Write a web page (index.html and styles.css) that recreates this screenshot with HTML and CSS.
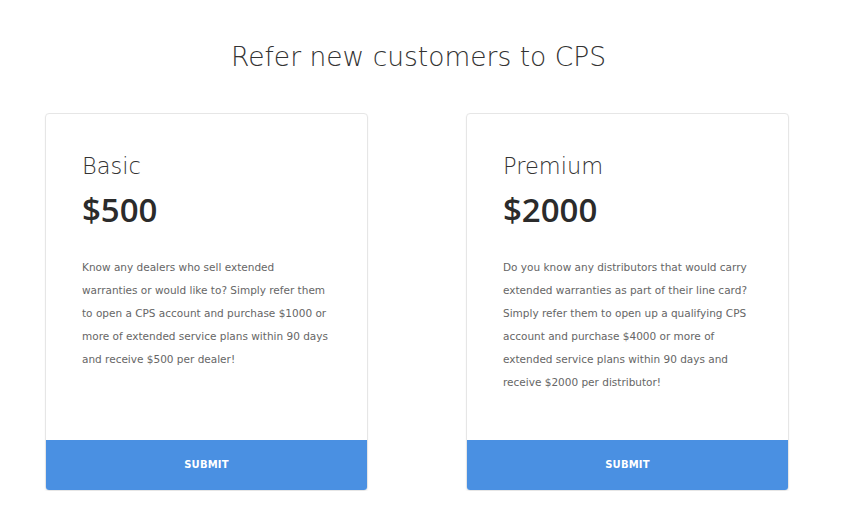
FILE: index.html
```html
<!DOCTYPE html>
<html>
<head>
<meta charset="utf-8">
<link rel="stylesheet" href="styles.css">
</head>
<body>
<h1 class="title">Refer new customers to CPS</h1>
<div class="cards">
  <div class="card">
    <div class="card-body">
      <h2 class="plan">Basic</h2>
      <div class="price">$500</div>
      <p class="desc">Know any dealers who sell extended<br>warranties or would like to? Simply refer them<br>to open a CPS account and purchase $1000 or<br>more of extended service plans within 90 days<br>and receive $500 per dealer!</p>
    </div>
    <button class="submit">SUBMIT</button>
  </div>
  <div class="card">
    <div class="card-body">
      <h2 class="plan">Premium</h2>
      <div class="price">$2000</div>
      <p class="desc">Do you know any distributors that would carry<br>extended warranties as part of their line card?<br>Simply refer them to open up a qualifying CPS<br>account and purchase $4000 or more of<br>extended service plans within 90 days and<br>receive $2000 per distributor!</p>
    </div>
    <button class="submit">SUBMIT</button>
  </div>
</div>
</body>
</html>
```
FILE: styles.css
```css
html, body {
  margin: 0;
  padding: 0;
  background: #fff;
}
body {
  font-family: "DejaVu Sans", "Noto Sans", sans-serif;
  color: #333;
}
.title {
  margin: 40px 0 0;
  text-align: center;
  font-size: 26.5px;
  font-weight: 200;
  line-height: 34px;
  color: #333;
  transform: translateX(-3px);
}
.cards {
  display: grid;
  grid-template-columns: 323px 323px;
  column-gap: 98px;
  padding-left: 45px;
  margin-top: 39px;
}
.card {
  display: flex;
  flex-direction: column;
  border: 1px solid #e6e6e6;
  border-radius: 4px;
  height: 378px;
  box-sizing: border-box;
  overflow: hidden;
  box-shadow: 0 1px 2px rgba(0,0,0,0.06);
}
.card-body {
  flex: 1;
  padding: 38px 36px 0 36px;
}
.plan {
  margin: 0;
  font-size: 22.5px;
  font-weight: 200;
  line-height: 28px;
  color: #333;
}
.price {
  margin-top: 11px;
  font-family: "Open Sans", "DejaVu Sans", sans-serif;
  font-size: 33px;
  font-weight: 600;
  line-height: 38px;
  color: #2b2b2b;
}
.desc {
  margin: 27px 0 0;
  font-size: 10.5px;
  line-height: 23px;
  color: #666;
  white-space: nowrap;
}
.submit {
  height: 50px;
  border: 0;
  margin: 0;
  padding: 0 0 2px;
  background: #4a90e2;
  color: #fff;
  font-family: inherit;
  font-size: 10px;
  font-weight: 700;
  letter-spacing: 0.2px;
  cursor: pointer;
}
```
